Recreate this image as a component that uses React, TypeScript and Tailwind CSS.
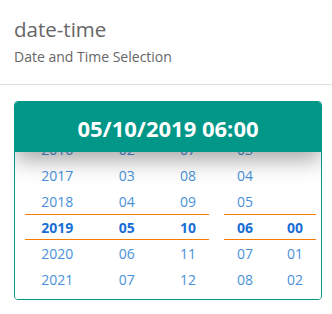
import React from 'react';

const years = ['2016', '2017', '2018', '2019', '2020', '2021', '2022'];
const months = ['02', '03', '04', '05', '06', '07', '08'];
const days = ['07', '08', '09', '10', '11', '12', '13'];
const hours = ['03', '04', '05', '06', '07', '08', '09'];
const minutes = ['', '', '', '00', '01', '02', '03'];

const SELECTED = 3;

function DateRows() {
  return (
    <div className="flex w-[184px] flex-col">
      {years.map((year, i) => {
        const selected = i === SELECTED;
        return (
          <div
            key={year}
            className={`grid h-[26px] grid-cols-3 items-center text-[14px] ${
              selected
                ? 'border-y border-[#f57c00] font-bold text-[#1a6fd6]'
                : 'text-[#4a90d9]'
            }`}
          >
            <span className="pr-[13px] text-right">{year}</span>
            <span className="pr-[13px] text-right">{months[i]}</span>
            <span className="pr-[13px] text-right">{days[i]}</span>
          </div>
        );
      })}
    </div>
  );
}

function TimeRows() {
  return (
    <div className="flex w-[92px] flex-col">
      {hours.map((hour, i) => {
        const selected = i === SELECTED;
        return (
          <div
            key={hour}
            className={`flex h-[26px] items-center justify-between px-[13px] text-[14px] ${
              selected
                ? 'border-y border-[#f57c00] font-bold text-[#1a6fd6]'
                : 'text-[#4a90d9]'
            }`}
          >
            <span>{hour}</span>
            <span>{minutes[i]}</span>
          </div>
        );
      })}
    </div>
  );
}

export default function App() {
  return (
    <div className="h-[314px] w-[332px] bg-white font-['Open_Sans',sans-serif]">
      <div className="px-[14px] pt-[15px]">
        <h1 className="text-[20.5px] leading-[28px] font-normal text-[#666]">date-time</h1>
        <p className="mt-[4px] text-[14px] leading-[19px] text-[#666]">Date and Time Selection</p>
      </div>
      <div className="mt-[18px] h-px w-full bg-[#dedede]" />

      <div className="mx-[14px] mt-[16px] flex w-[308px] flex-col overflow-hidden rounded-[4px] border border-[#009688]">
        <div className="relative z-10 flex h-[50px] items-center justify-center bg-[#009688] pt-[3px] shadow-[0_8px_22px_rgba(0,0,0,0.35)]">
          <span className="text-[22px] font-bold text-white">05/10/2019 06:00</span>
        </div>
        <div className="h-[147px] overflow-hidden bg-white">
          <div className="-mt-[16px] flex gap-[15px] pl-[10px]">
            <DateRows />
            <TimeRows />
          </div>
        </div>
      </div>
    </div>
  );
}
